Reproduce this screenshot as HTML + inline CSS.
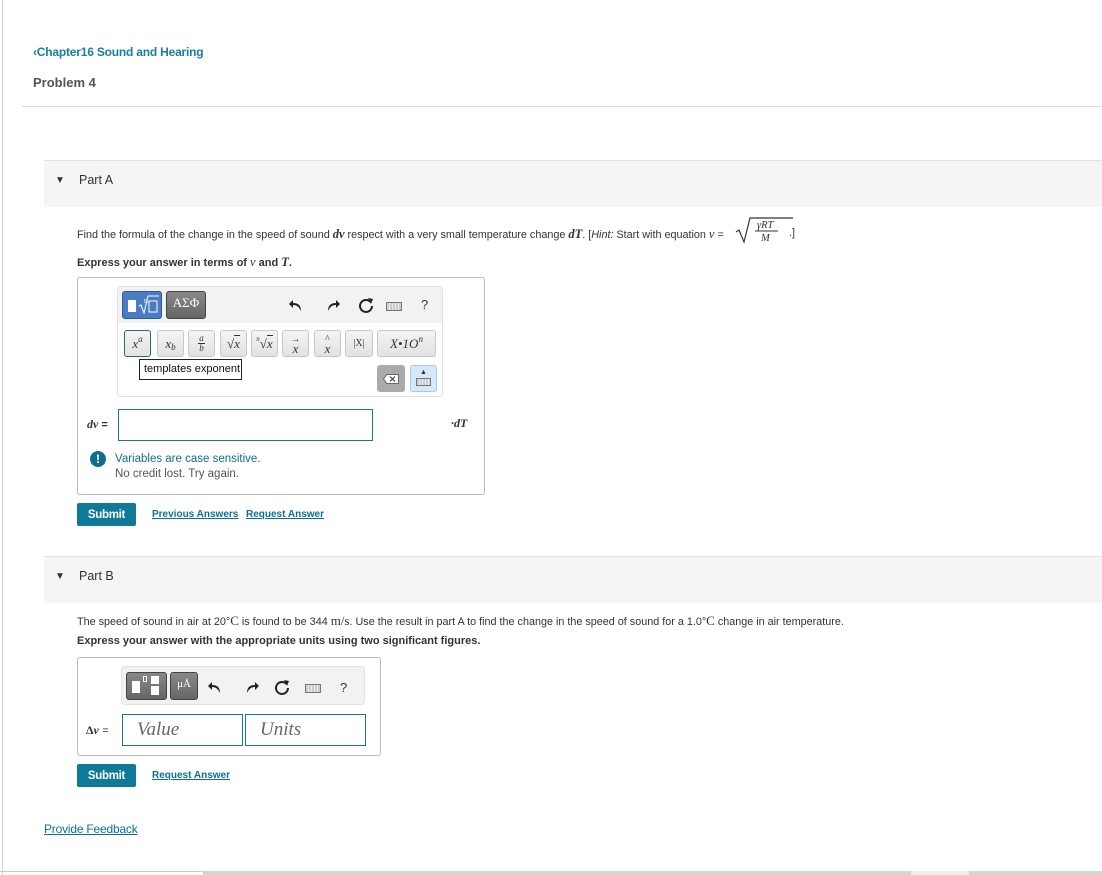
<!DOCTYPE html>
<html><head><meta charset="utf-8"><style>
*{margin:0;padding:0;box-sizing:border-box}
body{width:1102px;height:875px;position:relative;overflow:hidden;background:#fff;font-family:"Liberation Sans",Arial,sans-serif;color:#333}
.a{position:absolute;white-space:nowrap}
.m{font-family:"Liberation Serif",serif;font-style:italic}
.btn{position:absolute;border:1px solid #c8c8c8;border-radius:3px;background:linear-gradient(#f4f4f4,#e2e2e2);font-family:"Liberation Serif",serif;font-style:italic;font-size:13px;color:#333;display:flex;align-items:center;justify-content:center}
.ico{position:absolute}
.lnk{color:#0b7094;text-decoration:underline;font-weight:bold;font-size:10px}
.sub{position:absolute;background:#0e7a98;color:#fff;font-weight:bold;font-size:11.5px;display:flex;align-items:center;justify-content:center;border-radius:2px;letter-spacing:-0.3px}
.kb{position:absolute;width:16px;height:9px;border:1px solid #777;background:repeating-linear-gradient(90deg,#ccc 0 2px,#eee 2px 3px)}
</style></head><body>
<div class="a" style="left:2px;top:0;width:1px;height:875px;background:#d0d0d0"></div>
<div class="a" style="left:33px;top:45px;font-size:12px;color:#1a7ea0;font-weight:bold;letter-spacing:-0.2px">&lsaquo;Chapter16 Sound and Hearing</div>
<div class="a" style="left:33px;top:75px;font-size:13px;color:#555;font-weight:bold">Problem 4</div>
<div class="a" style="left:22px;top:106px;width:1080px;height:1px;background:#ddd"></div>

<div class="a" style="left:44px;top:160px;width:1058px;height:47px;background:#f5f5f5;border-top:1px solid #e2e2e2"></div>
<div class="a" style="left:55px;top:175px;font-size:10px">&#9660;</div>
<div class="a" style="left:79px;top:173px;font-size:12.5px;color:#333">Part A</div>

<div class="a" style="left:77px;top:227px;font-size:10.8px;color:#333">Find the formula of the change in the speed of sound <span class="m" style="font-weight:bold;font-size:12.5px">dv</span> respect with a very small temperature change <span class="m" style="font-weight:bold;font-size:12.5px">dT</span>. [<i>Hint:</i> Start with equation <span class="m" style="font-size:12.5px">v</span> =</div>
<svg class="a" style="left:735px;top:216px" width="60" height="28"><path d="M1 16 L4 14 L9 26 L15 2 L58 2" stroke="#333" fill="none" stroke-width="1.2"/><text x="22" y="12" font-family="Liberation Serif" font-style="italic" font-size="10.5" fill="#333">γRT</text><line x1="20" y1="15" x2="43" y2="15" stroke="#333"/><text x="26" y="25" font-family="Liberation Serif" font-style="italic" font-size="10.5" fill="#333">M</text></svg>
<div class="a" style="left:789px;top:227px;font-size:10.8px">.]</div>
<div class="a" style="left:77px;top:255px;font-size:11px;font-weight:bold">Express your answer in terms of <span class="m" style="font-weight:normal;font-size:12.5px">v</span> and <span class="m" style="font-weight:bold;font-size:12.5px">T</span>.</div>

<div class="a" style="left:77px;top:277px;width:408px;height:218px;border:1px solid #bbb;border-radius:3px"></div>
<div class="a" style="left:117px;top:286px;width:326px;height:111px;border:1px solid #e2e2e2;border-radius:4px;background:#fff"></div>
<div class="a" style="left:118px;top:287px;width:324px;height:36px;background:#f2f2f2;border-radius:4px 4px 0 0"></div>
<div class="a" style="left:122px;top:291px;width:40px;height:28px;background:#4a7cc4;border:1px solid #2e5a9c;border-radius:3px"><div style="position:absolute;left:5px;top:8px;width:8px;height:12px;background:#fff"></div><svg style="position:absolute;left:15px;top:3px" width="22" height="20"><path d="M1 11 L3 10 L6 18 L10 1 L21 1" stroke="#fff" fill="none"/><rect x="11" y="6" width="8" height="11" stroke="#fff" fill="none"/><text x="6" y="8" font-size="7" fill="#fff">n</text></svg></div>
<div class="a" style="left:166px;top:291px;width:40px;height:28px;background:linear-gradient(#888,#666);border:1px solid #444;border-radius:3px;color:#fff;font-family:'Liberation Serif',serif;font-size:13px;text-align:center;line-height:22px">ΑΣΦ</div>
<svg class="ico" style="left:289px;top:299px" width="14" height="13"><path d="M12 12 C12 6 9 4 4 4 L4 1 L0 5 L4 9 L4 6 C8 6 10 8 12 12Z" fill="#222"/></svg>
<svg class="ico" style="left:326px;top:299px" width="14" height="13"><path d="M2 12 C2 6 5 4 10 4 L10 1 L14 5 L10 9 L10 6 C6 6 4 8 2 12Z" fill="#222"/></svg>
<svg class="ico" style="left:358px;top:297px" width="16" height="16"><path d="M12.5 5 A6 6 0 1 0 14 9" stroke="#222" stroke-width="2" fill="none"/><path d="M10 1 L15 2 L13 7Z" fill="#222"/></svg>
<div class="kb" style="left:386px;top:302px"></div>
<div class="a" style="left:421px;top:297px;font-size:13px;color:#333">?</div>

<div class="btn" style="left:124px;top:330px;width:27px;height:27px;border-color:#2a6a6a">x<span style="font-size:9px;position:relative;top:-5px">a</span></div>
<div class="btn" style="left:157px;top:330px;width:27px;height:27px">x<span style="font-size:9px;position:relative;top:3px">b</span></div>
<div class="btn" style="left:188px;top:330px;width:27px;height:27px;font-size:9px;flex-direction:column;line-height:9px"><span style="border-bottom:1px solid #333;padding:0 1px">a</span><span>b</span></div>
<div class="btn" style="left:220px;top:330px;width:27px;height:27px">&#8730;<span style="border-top:1px solid #333">x</span></div>
<div class="btn" style="left:251px;top:330px;width:27px;height:27px"><span style="font-size:7px;position:relative;top:-5px">n</span>&#8730;<span style="border-top:1px solid #333">x</span></div>
<div class="btn" style="left:282px;top:330px;width:27px;height:27px;flex-direction:column;line-height:9px"><span style="font-style:normal;font-size:10px">&#8594;</span><span>x</span></div>
<div class="btn" style="left:314px;top:330px;width:27px;height:27px;flex-direction:column;line-height:9px"><span style="font-style:normal;font-size:10px">^</span><span>x</span></div>
<div class="btn" style="left:345px;top:330px;width:28px;height:27px;font-size:10px;font-style:normal">|X|</div>
<div class="btn" style="left:377px;top:330px;width:59px;height:27px;font-size:13px">X•1O<span style="font-size:9px;position:relative;top:-5px">n</span></div>
<div class="a" style="left:139px;top:359px;width:103px;height:21px;border:1px solid #222;background:#fff;font-size:11px;color:#111;padding:3px 0 0 4px">templates exponent</div>
<div class="a" style="left:377px;top:365px;width:28px;height:27px;background:#aaa;border-radius:3px"><svg style="position:absolute;left:6px;top:9px" width="16" height="10"><path d="M4 0.5 L15.5 0.5 L15.5 9.5 L4 9.5 L0.5 5Z" fill="#fff" stroke="#666"/><path d="M7 2.5 L12 7.5 M12 2.5 L7 7.5" stroke="#333"/></svg></div>
<div class="a" style="left:410px;top:365px;width:27px;height:27px;background:#d6e9fb;border:1px solid #aac8e8;border-radius:3px"><div class="kb" style="left:5px;top:12px;width:15px;height:8px"></div><div style="position:absolute;left:9px;top:3px;font-size:7px">&#9650;</div></div>

<div class="a m" style="left:87px;top:417px;font-size:12px;font-weight:bold">dv <span style="font-style:normal;font-family:'Liberation Sans';font-size:11px">=</span></div>
<div class="a" style="left:118px;top:409px;width:255px;height:32px;border:1px solid #1a7a96"></div>
<div class="a m" style="left:451px;top:416px;font-size:12px;font-weight:bold">&middot;dT</div>
<div class="a" style="left:90px;top:451px;width:16px;height:16px;border-radius:50%;background:#0f6e8f;color:#fff;font-weight:bold;font-size:12px;text-align:center;line-height:16px">!</div>
<div class="a" style="left:115px;top:452px;font-size:11.5px;color:#0f6e8f;line-height:15px">Variables are case sensitive.<br><span style="color:#555">No credit lost. Try again.</span></div>

<div class="sub" style="left:77px;top:503px;width:59px;height:23px">Submit</div>
<div class="a lnk" style="left:152px;top:509px">Previous Answers</div>
<div class="a lnk" style="left:246px;top:509px">Request Answer</div>

<div class="a" style="left:44px;top:556px;width:1058px;height:47px;background:#f5f5f5;border-top:1px solid #e2e2e2"></div>
<div class="a" style="left:55px;top:571px;font-size:10px">&#9660;</div>
<div class="a" style="left:79px;top:569px;font-size:12.5px;color:#333">Part B</div>
<div class="a" style="left:77px;top:613px;font-size:10.8px">The speed of sound in air at 20&deg;<span style="font-family:'Liberation Serif';font-size:13px">C</span> is found to be 344 <span style="font-family:'Liberation Serif';font-size:13px">m/s</span>. Use the result in part A to find the change in the speed of sound for a 1.0&deg;<span style="font-family:'Liberation Serif';font-size:13px">C</span> change in air temperature.</div>
<div class="a" style="left:77px;top:635px;font-size:11px;font-weight:bold">Express your answer with the appropriate units using two significant figures.</div>

<div class="a" style="left:77px;top:657px;width:304px;height:99px;border:1px solid #bbb;border-radius:3px"></div>
<div class="a" style="left:121px;top:666px;width:244px;height:39px;background:#f2f2f2;border:1px solid #e2e2e2;border-radius:4px"></div>
<div class="a" style="left:126px;top:672px;width:41px;height:28px;background:linear-gradient(#888,#666);border:1px solid #444;border-radius:3px"><div style="position:absolute;left:5px;top:8px;width:8px;height:12px;background:#fff"></div><div style="position:absolute;left:16px;top:3px;width:4px;height:6px;border:1px solid #fff"></div><div style="position:absolute;left:24px;top:3px;width:8px;height:8px;background:#fff"></div><div style="position:absolute;left:24px;top:13px;width:8px;height:9px;background:#fff"></div></div>
<div class="a" style="left:170px;top:672px;width:28px;height:28px;background:linear-gradient(#888,#666);border:1px solid #444;border-radius:3px;color:#fff;font-size:11px;text-align:center;line-height:22px;font-family:'Liberation Serif'">μÅ</div>
<svg class="ico" style="left:208px;top:681px" width="14" height="13"><path d="M12 12 C12 6 9 4 4 4 L4 1 L0 5 L4 9 L4 6 C8 6 10 8 12 12Z" fill="#222"/></svg>
<svg class="ico" style="left:245px;top:681px" width="14" height="13"><path d="M2 12 C2 6 5 4 10 4 L10 1 L14 5 L10 9 L10 6 C6 6 4 8 2 12Z" fill="#222"/></svg>
<svg class="ico" style="left:274px;top:679px" width="16" height="16"><path d="M12.5 5 A6 6 0 1 0 14 9" stroke="#222" stroke-width="2" fill="none"/><path d="M10 1 L15 2 L13 7Z" fill="#222"/></svg>
<div class="kb" style="left:305px;top:684px"></div>
<div class="a" style="left:340px;top:680px;font-size:13px;color:#333">?</div>
<div class="a" style="left:86px;top:723px;font-size:12px;font-weight:bold"><span style="font-family:'Liberation Serif'">Δ<i>v</i></span> <span style="font-size:11px;font-weight:normal">=</span></div>
<div class="a" style="left:122px;top:714px;width:121px;height:32px;border:1px solid #1a7a96;font-family:'Liberation Serif';font-style:italic;font-size:19px;color:#666;padding:4px 0 0 14px">Value</div>
<div class="a" style="left:245px;top:714px;width:121px;height:32px;border:1px solid #1a7a96;font-family:'Liberation Serif';font-style:italic;font-size:19px;color:#666;padding:4px 0 0 14px">Units</div>
<div class="sub" style="left:77px;top:764px;width:59px;height:23px">Submit</div>
<div class="a lnk" style="left:152px;top:770px">Request Answer</div>

<div class="a" style="left:44px;top:822px;font-size:12px;color:#0b7094;text-decoration:underline;letter-spacing:-0.2px">Provide Feedback</div>
<div class="a" style="left:0;top:871px;width:203px;height:1px;background:#ccc"></div>
<div class="a" style="left:203px;top:871px;width:899px;height:4px;background:#d4d4d4"></div>
<div class="a" style="left:911px;top:871px;width:58px;height:4px;background:#eee"></div>
</body></html>
